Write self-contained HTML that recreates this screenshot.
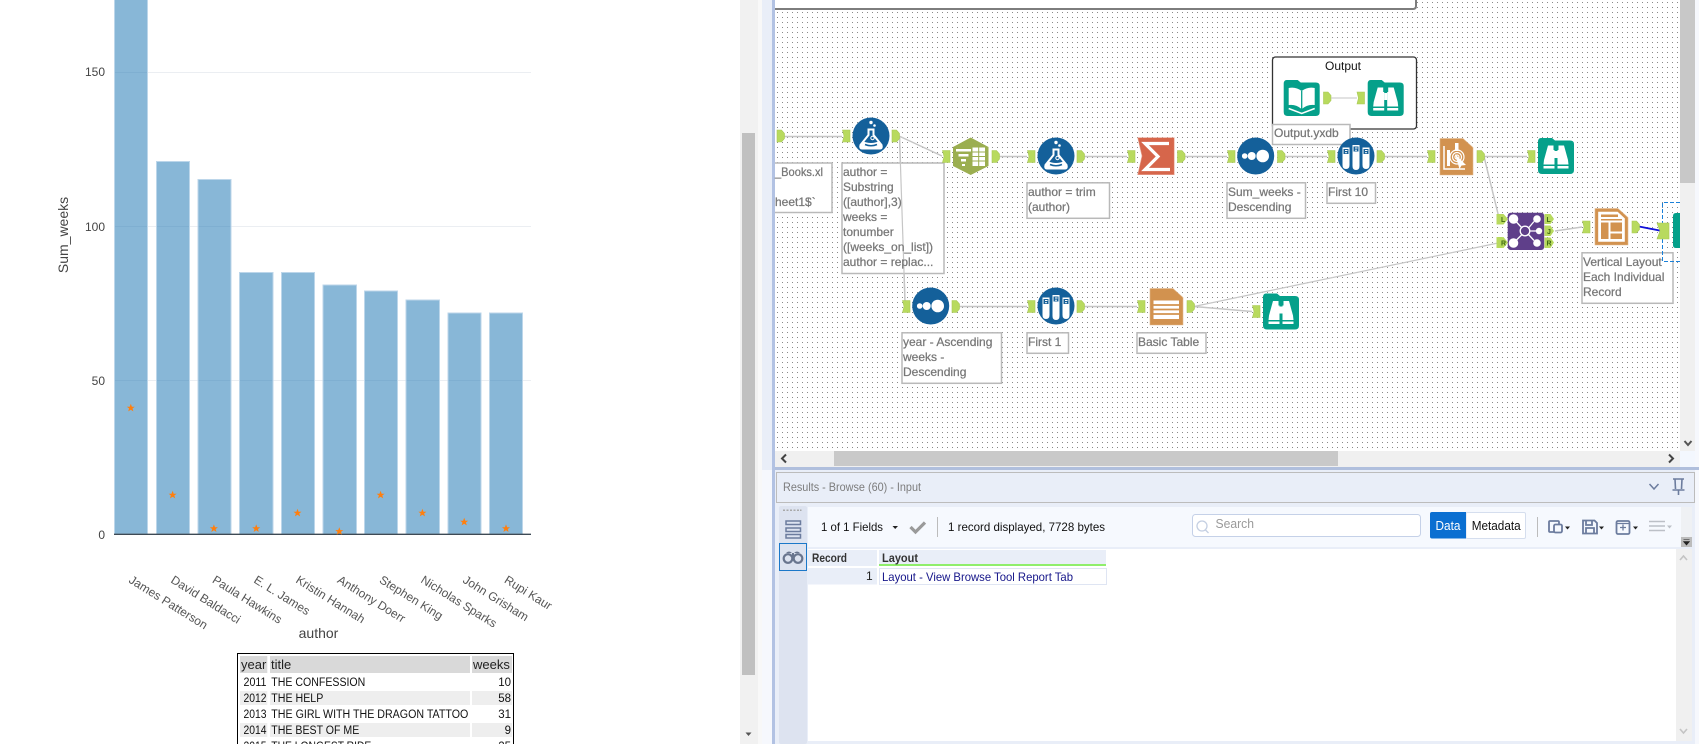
<!DOCTYPE html>
<html><head><meta charset="utf-8"><style>
html,body{margin:0;padding:0;width:1699px;height:744px;overflow:hidden;background:#fff}
svg{display:block;font-family:"Liberation Sans",sans-serif}
.ax{font-size:12px;fill:#444}
.xl{font-size:12px;fill:#555}
.at{font-size:14px;fill:#444}
.an{font-size:12px;fill:#777;stroke:#777;stroke-width:.25}
.ab{fill:#fff;stroke:#b9b9b9;stroke-width:1.5}
.ln{stroke:#c6c6c6;stroke-width:1.5;fill:none}
.th{font-size:13px;fill:#222}
.td{font-size:11.500px;fill:#111}
.b{fill:rgba(31,119,180,.53);stroke:#bcd6ea;stroke-width:1}
.ic{fill:none;stroke:#6c7c9e;stroke-width:1.8}
</style></head><body>
<svg width="1699" height="744" viewBox="0 0 1699 744" xmlns="http://www.w3.org/2000/svg">
<defs>
<pattern id="dots" x="777" y="12" width="5" height="5" patternUnits="userSpaceOnUse"><rect width="1" height="1" fill="#8a8a8a"/></pattern>
<path id="star" d="M0-4.2 1.1-1.3 4-1.3 1.7.5 2.6 3.4 0 1.7-2.6 3.4-1.7.5-4-1.3-1.1-1.3Z" fill="#ff7f0e"/>
<path id="out" d="M0-6H4.500L7.500-2.500V2.500L4.500 6H0Z" fill="#b8da5e" stroke="#a9c955" stroke-width=".6"/>
<path id="in" d="M0-6H7.500V6H0L1.500 0Z" fill="#b8da5e" stroke="#a9c955" stroke-width=".6"/>
<g id="flask"><circle r="18.500" fill="#14609a"/><path d="M-3.500-6.500H3.500M-2.500-6.500V-1L-10.500 9Q-11.500 12.500-9 12.500H9Q11.500 12.500 10.500 9L2.500-1V-6.500" fill="#14609a" stroke="#fff" stroke-width="2"/><path d="M-8.500 5Q0 9 8.500 5L10 9Q11 12 9 12H-9Q-11 12-10 9Z" fill="#fff"/><path d="M-6 8.500Q0 11 6 8.500" stroke="#14609a" stroke-width="1.500" fill="none"/><circle cx="1.500" cy="2" r="1.700" fill="none" stroke="#fff" stroke-width="1"/><circle cx="0" cy="-13.500" r="1.700" fill="#fff"/><circle cx="3.500" cy="-10.500" r="1.300" fill="#fff"/></g>
<g id="sort"><circle r="18.500" fill="#14609a"/><circle cx="-11" cy="0" r="2.800" fill="#fff"/><circle cx="-4" cy="0" r="4" fill="#fff"/><circle cx="7" cy="0" r="6.300" fill="#fff"/></g>
<g id="sample"><circle r="18.500" fill="#14609a"/><g fill="#fff"><path d="M-13.500-8.500H-6.500V9Q-6.500 13-10 13T-13.500 9Z"/><path d="M-3.500-11H3.500V10Q3.500 14 0 14T-3.500 10Z"/><path d="M6.500-8.500H13.500V9Q13.500 13 10 13T6.500 9Z"/></g><g fill="#14609a"><rect x="-12.500" y="-7" width="5" height="5"/><rect x="-2.500" y="-9.500" width="5" height="5"/><rect x="7.500" y="-7" width="5" height="5"/></g><g fill="#fff"><rect x="-11" y="-6" width="2.500" height="1"/><rect x="-1" y="-8.500" width="2.500" height="1"/><rect x="9" y="-6" width="2.500" height="1"/><rect x="-11" y="-3.800" width="2" height="1"/><rect x="-1" y="-6.300" width="2" height="1"/><rect x="9" y="-3.800" width="2" height="1"/></g></g>
<g id="browse"><path d="M0 4Q0 0 3 0H14L17 2.500H32Q36 2.500 36 6V32Q36 36 32 36H4Q0 36 0 32Z" fill="#05a08a"/><g fill="#fff"><path d="M10 7.500H15.500V12H16.500V26.500H5.500L6 22Z"/><path d="M20.500 7.500H26L30 22 30.500 26.500H19.500V12H20.500Z"/><rect x="16.500" y="13" width="3" height="7"/><rect x="5.500" y="28" width="11" height="2.500"/><rect x="19.500" y="28" width="11" height="2.500"/></g></g>
<g id="book"><path d="M0 4Q0 0 3 0H14L17 2.500H32Q36 2.500 36 6V32Q36 36 32 36H4Q0 36 0 32Z" fill="#05a08a"/><path d="M18 11Q12 6.500 5 8V25Q12 24 18 29Q24 24 31 25V8Q24 6.500 18 11Z" fill="#fff"/><path d="M18 11V29" stroke="#05a08a" stroke-width="1.300"/><path d="M5 28.500 18 33.500 31 28.500" stroke="#fff" stroke-width="1.500" fill="none"/></g>
<path id="doc" d="M0 1H23L33 10V37.500H0Z" fill="#d2924f" stroke="#e2b98f" stroke-width=".6"/>
</defs>

<!-- left panel -->
<rect x="0" y="0" width="740" height="744" fill="#fff"/>
<g stroke="#ebeef2" stroke-width="1">
<line x1="114" x2="531" y1="72.500" y2="72.500"/><line x1="114" x2="531" y1="226.500" y2="226.500"/><line x1="114" x2="531" y1="380.500" y2="380.500"/></g>
<g>
<rect class="b" x="114.500" y="-5" width="33" height="539"/>
<rect class="b" x="156.500" y="161.500" width="33" height="372.500"/>
<rect class="b" x="198" y="179.500" width="33" height="354.500"/>
<rect class="b" x="239.500" y="272.500" width="33.500" height="261.500"/>
<rect class="b" x="281.500" y="272.500" width="33" height="261.500"/>
<rect class="b" x="323" y="285" width="33.500" height="249"/>
<rect class="b" x="364.500" y="291" width="33" height="243"/>
<rect class="b" x="406" y="300" width="33.500" height="234"/>
<rect class="b" x="448" y="313" width="33" height="221"/>
<rect class="b" x="489.500" y="313" width="33" height="221"/>
</g>
<line x1="114" x2="531" y1="534.300" y2="534.300" stroke="#3e4a55" stroke-width="1.300"/>
<use href="#star" x="130.800" y="408"/><use href="#star" x="172.600" y="495"/><use href="#star" x="213.900" y="528.600"/><use href="#star" x="256.200" y="528.600"/><use href="#star" x="297.500" y="513"/><use href="#star" x="339.300" y="531.400"/><use href="#star" x="380.600" y="495"/><use href="#star" x="422.400" y="513"/><use href="#star" x="464.200" y="522"/><use href="#star" x="506" y="528.600"/>
<g class="ax" text-anchor="end"><text x="105" y="76">150</text><text x="105" y="231">100</text><text x="105" y="385">50</text><text x="105" y="539">0</text></g>
<text class="at" transform="translate(68,235) rotate(-90)" text-anchor="middle">Sum_weeks</text>
<text class="at" x="318.500" y="638" text-anchor="middle">author</text>
<g class="xl">
<text transform="translate(128,582) rotate(32)">James Patterson</text>
<text transform="translate(170,582) rotate(32)">David Baldacci</text>
<text transform="translate(211.500,582) rotate(32)">Paula Hawkins</text>
<text transform="translate(253,582) rotate(32)">E. L. James</text>
<text transform="translate(295,582) rotate(32)">Kristin Hannah</text>
<text transform="translate(336.500,582) rotate(32)">Anthony Doerr</text>
<text transform="translate(378.500,582) rotate(32)">Stephen King</text>
<text transform="translate(420,582) rotate(32)">Nicholas Sparks</text>
<text transform="translate(462,582) rotate(32)">John Grisham</text>
<text transform="translate(503.500,582) rotate(32)">Rupi Kaur</text>
</g>
<!-- table -->
<rect x="237.500" y="653.500" width="276" height="100" fill="#fff" stroke="#000" stroke-width="1"/>
<g fill="#d9d9d9"><rect x="240" y="656" width="27.300" height="17"/><rect x="270" y="656" width="200" height="17"/><rect x="472" y="656" width="40" height="17"/></g>
<g fill="#eee"><rect x="240" y="691" width="27.300" height="14"/><rect x="270" y="691" width="200" height="14"/><rect x="472" y="691" width="40" height="14"/><rect x="240" y="723" width="27.300" height="14"/><rect x="270" y="723" width="200" height="14"/><rect x="472" y="723" width="40" height="14"/></g>
<g class="th"><text x="241" y="669">year</text><text x="271" y="669">title</text><text x="473" y="669">weeks</text></g>
<g class="td"><text x="243.500" y="686" textLength="23" lengthAdjust="spacingAndGlyphs">2011</text><text x="271.300" y="686" textLength="94" lengthAdjust="spacingAndGlyphs">THE CONFESSION</text><text x="511" y="686" text-anchor="end">10</text>
<text x="243.500" y="702" textLength="23" lengthAdjust="spacingAndGlyphs">2012</text><text x="271.300" y="702" textLength="52" lengthAdjust="spacingAndGlyphs">THE HELP</text><text x="511" y="702" text-anchor="end">58</text>
<text x="243.500" y="718" textLength="23" lengthAdjust="spacingAndGlyphs">2013</text><text x="271.300" y="718" textLength="197" lengthAdjust="spacingAndGlyphs">THE GIRL WITH THE DRAGON TATTOO</text><text x="511" y="718" text-anchor="end">31</text>
<text x="243.500" y="734" textLength="23" lengthAdjust="spacingAndGlyphs">2014</text><text x="271.300" y="734" textLength="88" lengthAdjust="spacingAndGlyphs">THE BEST OF ME</text><text x="511" y="734" text-anchor="end">9</text>
<text x="243.500" y="750" textLength="23" lengthAdjust="spacingAndGlyphs">2015</text><text x="271.300" y="750" textLength="100" lengthAdjust="spacingAndGlyphs">THE LONGEST RIDE</text><text x="511" y="750" text-anchor="end">25</text></g>
<!-- page scrollbar -->
<rect x="740" y="0" width="18" height="744" fill="#f1f1f1"/>
<rect x="742" y="133" width="13" height="542" fill="#c0c0c0"/>
<path d="M745.500 732.500H751.500L748.500 736Z" fill="#555"/>
<!-- divider -->
<rect x="758" y="0" width="4" height="744" fill="#f8f8f8"/>
<rect x="762" y="0" width="10" height="470" fill="#e9eef8"/>
<rect x="762" y="470" width="11" height="274" fill="#f6f8fd"/>
<rect x="772" y="0" width="3" height="744" fill="#b2c2e3"/>

<!-- canvas -->
<rect x="775" y="0" width="905" height="451" fill="#fff"/>
<rect x="775" y="0" width="905" height="451" fill="url(#dots)"/>
<path d="M775 0V9H1413Q1416 9 1416 6V0Z" fill="#fff" stroke="none"/>
<path d="M775 9H1413Q1416 9 1416 6V0" fill="none" stroke="#7d7d7d" stroke-width="2"/>
<!-- output container -->
<rect x="1272.500" y="57" width="144" height="72" rx="3" fill="#fff" stroke="#333" stroke-width="1.300"/>
<text x="1343" y="70" font-size="12" fill="#111" text-anchor="middle">Output</text>
<use href="#book" x="1283.700" y="80"/>
<use href="#out" x="1323.500" y="98"/>
<line class="ln" x1="1331" y1="98" x2="1357" y2="98" style="stroke-width:1"/>
<use href="#in" x="1357" y="98"/>
<use href="#browse" x="1367.700" y="80"/>
<!-- lines -->
<g class="ln">
<path d="M784 136.500H842"/>
<path d="M899 136 942 156"/>
<path d="M899.500 136 905 302"/>
<path d="M999 156.500H1027"/>
<path d="M1084 156.500H1127"/>
<path d="M1185 156.500H1227"/>
<path d="M1285 156.500H1327"/>
<path d="M1384 156.500H1427"/>
<path d="M1484 156.500H1527"/>
<path d="M1484 156.500 1498.300 215"/>
<path d="M959 306.500H1027"/>
<path d="M1084 306.500H1137"/>
<path d="M1194 306.500 1252 311.500"/>
<path d="M1194 306.500 1498 243" style="stroke-width:1.200"/>
<path d="M1555 231 1582 227"/>
</g>
<path d="M1639 226.500 1662 231" stroke="#1010d8" stroke-width="1.800"/>
<!-- annotations -->
<path class="ab" d="M775 163H832V212.500H775"/>
<rect class="ab" x="842" y="163" width="102" height="110.500"/>
<rect class="ab" x="1027" y="182.800" width="82.500" height="35.500"/>
<rect class="ab" x="1227" y="182.800" width="78.500" height="35.500"/>
<rect class="ab" x="1327" y="182.800" width="48.500" height="20.500"/>
<rect class="ab" x="902" y="332.800" width="99.500" height="50.500"/>
<rect class="ab" x="1027" y="332.800" width="41.500" height="20.500"/>
<rect class="ab" x="1137" y="332.800" width="69" height="20.500"/>
<rect class="ab" x="1582" y="252.800" width="91" height="50.500"/>
<rect class="ab" x="1272.500" y="124.500" width="77.500" height="20"/>
<path class="ln" d="M899.500 136 905 302" style="stroke-width:1.200"/>
<g class="an">
<text x="775" y="176" textLength="48" lengthAdjust="spacingAndGlyphs">_Books.xl</text><text x="775" y="206">heet1$`</text>
<text x="843" y="176">author =</text><text x="843" y="191">Substring</text><text x="843" y="206">([author],3)</text><text x="843" y="221">weeks =</text><text x="843" y="236">tonumber</text><text x="843" y="251">([weeks_on_list])</text><text x="843" y="266">author = replac...</text>
<text x="1028" y="196">author = trim</text><text x="1028" y="211">(author)</text>
<text x="1228" y="196">Sum_weeks -</text><text x="1228" y="211">Descending</text>
<text x="1328" y="196">First 10</text>
<text x="903" y="346">year - Ascending</text><text x="903" y="361">weeks -</text><text x="903" y="376">Descending</text>
<text x="1028" y="346">First 1</text>
<text x="1138" y="346">Basic Table</text>
<text x="1583" y="266">Vertical Layout</text><text x="1583" y="281">Each Individual</text><text x="1583" y="296">Record</text>
<text x="1274" y="137">Output.yxdb</text>
</g>
<!-- row A -->
<use href="#out" x="777" y="136"/><use href="#in" x="842.500" y="136"/>
<use href="#flask" x="871" y="136"/>
<use href="#out" x="892" y="136"/>
<!-- row B -->
<use href="#in" x="942.500" y="156.500"/>
<path d="M970.700 137.500 988.500 147V166L970.700 175 953 166V147Z" fill="#9bae50"/>
<g fill="#fff"><path d="M956 149H971V151.500H956ZM958.500 154H968.500V156.500H958.500ZM961 159H966V161.500H961ZM962 164H965V166H962Z"/><path d="M972.500 147.500H985V166H972.500Z"/></g>
<path d="M972.500 152H985M972.500 156.500H985M972.500 161H985M978.700 147.500V166" stroke="#9bae50" stroke-width="1"/>
<use href="#out" x="992" y="156.500"/><use href="#in" x="1027.500" y="156.500"/>
<use href="#flask" x="1056" y="156"/>
<use href="#out" x="1077" y="156.500"/><use href="#in" x="1127.500" y="156.500"/>
<path d="M1137.700 137.700H1174.200V174.700H1137.700L1142 156Z" fill="#d6664b" stroke="#e9a492" stroke-width=".6"/>
<path d="M1169 143.500H1145L1158 156.500 1145 169.500H1170" fill="none" stroke="#fff" stroke-width="3.200"/>
<use href="#out" x="1177.500" y="156.500"/><use href="#in" x="1227.500" y="156.500"/>
<use href="#sort" x="1255.700" y="156"/>
<use href="#out" x="1277.500" y="156.500"/><use href="#in" x="1327.500" y="156.500"/>
<use href="#sample" x="1356" y="156"/>
<use href="#out" x="1377" y="156.500"/><use href="#in" x="1427.500" y="156.500"/>
<use href="#doc" x="1440" y="137.500"/>
<g fill="none" stroke="#fff"><path d="M1444 146V169H1465" stroke-width="1.500"/><circle cx="1457" cy="157" r="7" stroke-width="1.200"/><circle cx="1457" cy="157" r="4.500" stroke-width="1.200"/><circle cx="1457" cy="157" r="2" stroke-width="1.200"/></g>
<path d="M1455 154 1466 165 1461.500 165.500 1459.500 169Z" fill="#fff"/>
<rect x="1455" y="143" width="3.500" height="8" fill="#fff"/><rect x="1447" y="150" width="3" height="16" fill="#fff"/>
<use href="#out" x="1477" y="156.500"/><use href="#in" x="1527.500" y="156.500"/>
<use href="#browse" x="1538" y="138"/>
<!-- row C -->
<use href="#in" x="902.500" y="306.500"/>
<use href="#sort" x="930.700" y="306"/>
<use href="#out" x="952" y="306.500"/><use href="#in" x="1027.500" y="306.500"/>
<use href="#sample" x="1056" y="306"/>
<use href="#out" x="1077" y="306.500"/><use href="#in" x="1137.500" y="306.500"/>
<use href="#doc" x="1150" y="287.500"/>
<g><rect x="1153.500" y="300.500" width="25.500" height="18.500" fill="#fff"/><path d="M1153.500 305H1179M1153.500 309.500H1179M1153.500 314H1179" stroke="#d2924f" stroke-width="1.800"/></g>
<use href="#out" x="1187" y="306.500"/><use href="#in" x="1252.500" y="311.500"/>
<use href="#browse" x="1263" y="293.500"/>
<!-- join -->
<path d="M1496.500 214H1503.500L1508 219 1503.500 224.500H1496.500Z" fill="#b8da5e"/>
<path d="M1496.500 237H1503.500L1508 242.500 1503.500 248H1496.500Z" fill="#b8da5e"/>
<rect x="1507.700" y="212.700" width="36.500" height="37.300" rx="3" fill="#5f3f8a"/>
<g fill="#fff"><circle cx="1513.500" cy="219" r="4.800"/><circle cx="1513.500" cy="243" r="4.800"/><circle cx="1537" cy="219" r="3.800"/><circle cx="1537" cy="243" r="3.800"/><circle cx="1539" cy="231" r="3.200"/></g>
<g stroke="#fff" stroke-width="1.300" fill="none"><circle cx="1525" cy="231" r="4.800"/><path d="M1516 221.500 1522 228M1516 240.500 1522 234.500M1534 221.500 1528.500 228M1534 240.500 1528.500 234.500M1530 231H1536"/></g>
<g fill="#b8da5e"><path d="M1544.500 214H1550.500L1554 219 1550.500 224H1544.500ZM1544.500 225.500H1550.500L1554 231 1550.500 236H1544.500ZM1544.500 237.500H1550.500L1554 242.500 1550.500 248H1544.500Z"/></g>
<g font-size="7" font-weight="bold" fill="#3f6a12"><text x="1501" y="222">L</text><text x="1501" y="245.500">R</text><text x="1546.500" y="222">L</text><text x="1547" y="234">J</text><text x="1546.500" y="245.500">R</text></g>
<use href="#in" x="1582.500" y="227"/>
<use href="#doc" x="1595" y="207.500"/>
<path d="M1598.500 212H1617.500L1624.500 218.500V241.500H1598.500Z" fill="#fff" stroke="#fff" stroke-width=".6"/>
<g fill="#d2924f"><rect x="1601" y="214.500" width="17" height="2.500"/><rect x="1601" y="219" width="21" height="1.500"/><rect x="1601" y="222.500" width="7.500" height="16.500"/><rect x="1610.500" y="222.500" width="11.500" height="9"/><rect x="1610.500" y="233.500" width="11.500" height="5.500"/></g>
<use href="#out" x="1632" y="227"/>
<path d="M1680 202.500H1662.500V261.500H1680" fill="none" stroke="#1a80d8" stroke-width="1" stroke-dasharray="4 2"/>
<path d="M1657 223H1669V239H1657L1660 231Z" fill="#b8da5e" stroke="#a9c955" stroke-width=".6"/>
<path d="M1673 216Q1673 213 1676 213H1680V248H1676Q1673 248 1673 245Z" fill="#05a08a"/>

<!-- canvas scrollbars -->
<rect x="1680" y="0" width="15" height="451" fill="#f0f0f0"/>
<rect x="1680" y="0" width="15" height="183" fill="#c8c8c8"/>
<path d="M1684.500 441 1688 445 1691.500 441" fill="none" stroke="#555" stroke-width="2"/>
<rect x="775" y="451" width="905" height="16" fill="#f0f0f0"/>
<rect x="834" y="451" width="504" height="15" fill="#c9c9c9"/>
<path d="M786 454.500 782 458.500 786 462.500" fill="none" stroke="#444" stroke-width="2"/>
<path d="M1669 454.500 1673 458.500 1669 462.500" fill="none" stroke="#444" stroke-width="2"/>
<rect x="1680" y="451" width="15" height="16" fill="#f3f7fe"/>
<rect x="1695" y="0" width="4" height="467" fill="#f6f8fd"/>
<rect x="775" y="467" width="924" height="3" fill="#b0bfdd"/>

<!-- results panel -->
<rect x="775" y="470" width="924" height="274" fill="#e9eef8"/>
<rect x="1695" y="470" width="4" height="274" fill="#f6f8fd"/>
<rect x="776.500" y="472.500" width="918" height="30" fill="#e9eef8" stroke="#bcbcbc" stroke-width="1"/>
<text x="783" y="491" font-size="12" fill="#7c7c7c" textLength="138" lengthAdjust="spacingAndGlyphs">Results - Browse (60) - Input</text>
<path d="M1649.500 484 1654 489 1658.500 484" fill="none" stroke="#6c7c9e" stroke-width="1.500"/>
<path d="M1673 479H1684M1675 479 1675.500 489M1682 479 1681.500 489M1672.500 490H1684.500M1678.500 490V495" fill="none" stroke="#6c7c9e" stroke-width="1.600"/>
<!-- rail -->
<rect x="779" y="506" width="28" height="238" rx="2" fill="#dde3f0"/>
<g fill="#a8a8a8"><rect x="783" y="509.500" width="2" height="1.500"/><rect x="786.500" y="509.500" width="2" height="1.500"/><rect x="790" y="509.500" width="2" height="1.500"/><rect x="793.500" y="509.500" width="2" height="1.500"/><rect x="797" y="509.500" width="2" height="1.500"/><rect x="800" y="509.500" width="1.500" height="1.500"/></g>
<g fill="none" stroke="#6c7c9e" stroke-width="1.500"><rect x="786" y="521" width="14.500" height="3.500"/><rect x="786" y="528" width="14.500" height="3.500"/><rect x="786" y="534.500" width="14.500" height="3.500"/></g>
<rect x="779.500" y="543.500" width="27" height="27" fill="#dde3f0" stroke="#1b78c9" stroke-width="1"/>
<circle cx="788" cy="558.500" r="4.300" fill="none" stroke="#69758e" stroke-width="2.200"/><circle cx="798" cy="558.500" r="4.300" fill="none" stroke="#69758e" stroke-width="2.200"/><path d="M786 553Q789 550 792 553V557H794V553Q797 550 800 553" fill="#69758e"/>
<!-- toolbar -->
<rect x="808" y="507" width="873" height="40" fill="#f6f9fe"/>
<rect x="1681" y="507" width="11" height="30" fill="#eff1f4"/>
<rect x="1681" y="537" width="11" height="10" fill="#bcbcbc"/>
<path d="M1683.500 539.500H1689.500M1683.500 541.500H1689.500L1686.500 545Z" fill="#222" stroke="#222" stroke-width=".6"/>
<text x="821" y="531" font-size="12" fill="#111" textLength="62" lengthAdjust="spacingAndGlyphs">1 of 1 Fields</text>
<path d="M892.500 526H898L895.200 529Z" fill="#222"/>
<path d="M910.500 527 915.500 532 925 522.500" fill="none" stroke="#9a9a9a" stroke-width="3.200"/>
<line x1="937.500" y1="517" x2="937.500" y2="537" stroke="#bcbcbc"/>
<text x="948" y="531" font-size="12" fill="#111" textLength="157" lengthAdjust="spacingAndGlyphs">1 record displayed, 7728 bytes</text>
<rect x="1192.500" y="514.500" width="228" height="22" rx="3" fill="#fff" stroke="#c5d1e8"/>
<circle cx="1202" cy="526" r="5" fill="none" stroke="#c4cfe2" stroke-width="1.300"/><path d="M1205.500 530 1208.500 533" stroke="#c4cfe2" stroke-width="1.300"/>
<text x="1215.500" y="528" font-size="13" fill="#9a9a9a" textLength="38.500" lengthAdjust="spacingAndGlyphs">Search</text>
<rect x="1466" y="512.500" width="59.500" height="26" rx="1.500" fill="#fff" stroke="#d5deee"/>
<path d="M1432 512H1466V538.500H1432Q1430 538.500 1430 536.500V514Q1430 512 1432 512Z" fill="#0b6fd1"/>
<text x="1435.500" y="530" font-size="12.500" fill="#fff" textLength="25" lengthAdjust="spacingAndGlyphs">Data</text>
<text x="1471.700" y="530" font-size="12.500" fill="#111" textLength="49" lengthAdjust="spacingAndGlyphs">Metadata</text>
<line x1="1537.500" y1="517" x2="1537.500" y2="537" stroke="#bcbcbc"/>
<g class="ic"><path d="M1554 532H1550Q1549 532 1549 531V522Q1549 521 1550 521H1558Q1559 521 1559 522V524"/><rect x="1554" y="524.500" width="8" height="8" rx="1.500"/>
<path d="M1583 520.500H1594.500L1597 523V533.500H1583ZM1586 520.500V525H1592V520.500M1586 533.500V528H1594V533.500"/>
<rect x="1616.500" y="521" width="13" height="13" rx="1.500"/><path d="M1620 527.500H1626M1623 524.500V530.500M1616.500 523.500H1629.500" style="stroke-width:1.300"/></g>
<g fill="#222"><path d="M1565 526.500H1570L1567.500 529.500Z"/><path d="M1599 526.500H1604L1601.500 529.500Z"/><path d="M1633 526.500H1638L1635.500 529.500Z"/></g>
<path d="M1649 521.500H1665M1649 526H1665M1649 530.500H1665" stroke="#bcc0c7" stroke-width="1.500"/><path d="M1667 525.500H1672L1669.500 528.500Z" fill="#bcc0c7"/>
<!-- grid -->
<rect x="808" y="549" width="868" height="192" fill="#fff"/>
<rect x="808" y="550" width="69" height="16" fill="#e9eef8"/>
<rect x="879" y="550" width="227" height="16" fill="#e9eef8"/>
<rect x="879" y="564" width="227" height="2" fill="#8fee6c"/>
<rect x="808" y="568" width="69" height="16.500" fill="#e9eef8"/>
<rect x="879.500" y="568.500" width="227" height="16" fill="#fff" stroke="#dfe5f3"/>
<text x="812" y="562" font-size="12" font-weight="bold" fill="#333" textLength="35" lengthAdjust="spacingAndGlyphs">Record</text>
<text x="882" y="562" font-size="12" font-weight="bold" fill="#333" textLength="36" lengthAdjust="spacingAndGlyphs">Layout</text>
<text x="872.700" y="580" font-size="12" fill="#222" text-anchor="end">1</text>
<text x="882" y="581" font-size="12" fill="#16168a" textLength="191" lengthAdjust="spacingAndGlyphs">Layout - View Browse Tool Report Tab</text>
<!-- grid scrollbar -->
<rect x="1676" y="549" width="16" height="192" fill="#f0f0f0"/>
<path d="M1680 560 1683.500 556 1687 560" fill="none" stroke="#c4c4c4" stroke-width="1.600"/>
<path d="M1680 729 1683.500 733 1687 729" fill="none" stroke="#c4c4c4" stroke-width="1.600"/>
</svg>
</body></html>
